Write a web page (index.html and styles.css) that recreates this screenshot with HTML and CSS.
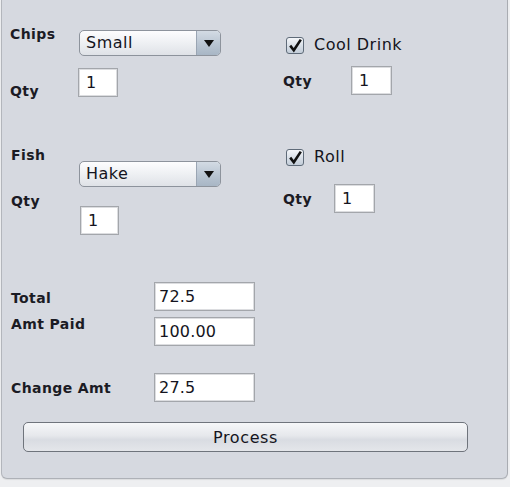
FILE: index.html
```html
<!DOCTYPE html>
<html>
<head>
<meta charset="utf-8">
<link rel="stylesheet" href="styles.css">
</head>
<body>
<div class="panel">
  <div class="orders">
    <div class="col-left">
      <span class="lbl m-chips">Chips</span>
      <div class="combo m-combo1">
        <span class="combo-text">Small</span>
        <span class="combo-btn"><svg width="10" height="7" viewBox="0 0 10 7"><path d="M0 0 H10 L5 7 Z" fill="#111"/></svg></span>
      </div>
      <span class="lbl m-qty1">Qty</span>
      <div class="field qty-chips">1</div>

      <span class="lbl m-fish">Fish</span>
      <div class="combo m-combo2">
        <span class="combo-text">Hake</span>
        <span class="combo-btn"><svg width="10" height="7" viewBox="0 0 10 7"><path d="M0 0 H10 L5 7 Z" fill="#111"/></svg></span>
      </div>
      <span class="lbl m-qty2">Qty</span>
      <div class="field qty-fish">1</div>
    </div>

    <div class="col-right">
      <div class="check m-drink">
        <span class="box"><svg width="15" height="15" viewBox="0 0 15 15"><path d="M2.2 7.6 L5.8 12.2 L12.8 1.6" fill="none" stroke="#111" stroke-width="2.6" stroke-linejoin="miter"/></svg></span>
        <span class="check-text">Cool Drink</span>
      </div>
      <div class="qty-row m-qtyrow1">
        <span class="lbl qty-lbl w-drink">Qty</span>
        <div class="field qty-drink">1</div>
      </div>
      <div class="check m-roll">
        <span class="box"><svg width="15" height="15" viewBox="0 0 15 15"><path d="M2.2 7.6 L5.8 12.2 L12.8 1.6" fill="none" stroke="#111" stroke-width="2.6" stroke-linejoin="miter"/></svg></span>
        <span class="check-text">Roll</span>
      </div>
      <div class="qty-row m-qtyrow2">
        <span class="lbl qty-lbl w-roll">Qty</span>
        <div class="field qty-roll">1</div>
      </div>
    </div>
  </div>

  <div class="totals">
    <span class="lbl m-total">Total</span>
    <div class="field amt m-total-f">72.5</div>
    <span class="lbl m-paid">Amt Paid</span>
    <div class="field amt m-paid-f">100.00</div>
    <span class="lbl m-change">Change Amt</span>
    <div class="field amt m-change-f">27.5</div>
  </div>

  <button class="process">Process</button>
</div>
</body>
</html>
```

FILE: styles.css
```css
html, body {
  margin: 0;
  padding: 0;
}
body {
  background: #eeeff1;
  width: 510px;
  height: 487px;
  overflow: hidden;
}
.panel {
  box-sizing: border-box;
  margin-left: 1px;
  width: 507px;
  height: 479px;
  background: #d6d9e0;
  border-left: 1px solid #b3b6bc;
  border-right: 1px solid #a9acb2;
  border-bottom: 1px solid #aeb1b7;
  border-radius: 0 0 6px 6px;
  padding-left: 8px;
  display: flex;
  flex-direction: column;
  align-items: flex-start;
  box-shadow: 0 1px 1px rgba(0,0,0,0.08);
}
.lbl {
  font-family: "DejaVu Sans", sans-serif;
  font-weight: bold;
  font-size: 14px;
  line-height: 16px;
  letter-spacing: 0.4px;
  color: #1b1b24;
  display: block;
}
.orders {
  display: flex;
  align-items: flex-start;
  width: 100%;
}
.col-left {
  width: 273px;
  display: grid;
  grid-template-columns: 69px auto;
  align-items: start;
  align-content: start;
  justify-items: start;
}
.m-chips { margin-top: 26px; }
.m-combo1 { margin-top: 30px; }
.m-qty1 { margin-top: 27px; }
.qty-chips { margin-top: 12px; margin-left: -1px; width: 40px; }
.m-fish { margin-top: 48px; margin-left: 1px; }
.m-combo2 { margin-top: 62px; }
.m-qty2 { margin-top: 6px; margin-left: 1px; }
.qty-fish { margin-top: 19px; margin-left: 1px; width: 39px; }

.combo {
  box-sizing: border-box;
  width: 142px;
  height: 26px;
  border: 1px solid #8d939c;
  border-radius: 5px;
  background: linear-gradient(#fdfdfe, #eef0f3 50%, #dfe2e7);
  display: flex;
  overflow: hidden;
}
.combo-text {
  flex: 1;
  font-family: "DejaVu Sans", sans-serif;
  font-size: 16px;
  line-height: 18px;
  letter-spacing: 0.5px;
  color: #141420;
  padding: 3px 0 0 6px;
}
.combo-btn {
  width: 23px;
  border-left: 1px solid #9aa5b3;
  background: linear-gradient(#d3dbe4, #b9c5d2 55%, #a8b6c5);
  display: flex;
  align-items: center;
  justify-content: center;
}

.field {
  box-sizing: border-box;
  height: 29px;
  background: #fff;
  border: 1px solid #a3a6ab;
  box-shadow: inset 0 0 0 1px #dcdde0;
  font-family: "DejaVu Sans", sans-serif;
  font-size: 16px;
  line-height: 26px;
  color: #141420;
  padding: 1px 0 0 7px;
}
.amt {
  width: 101px;
  padding-left: 4px;
  letter-spacing: 0.2px;
}

.col-right {
  display: flex;
  flex-direction: column;
  align-items: flex-start;
}
.check {
  display: flex;
  align-items: center;
  gap: 10px;
  margin-left: 3px;
  height: 18px;
}
.box {
  box-sizing: border-box;
  width: 18px;
  height: 17px;
  border: 1px solid #5f6b79;
  border-radius: 3px;
  background: linear-gradient(#f4f6f9, #d5dce5 60%, #c3cdd9);
  display: flex;
  align-items: center;
  justify-content: center;
}
.check-text {
  font-family: "DejaVu Sans", sans-serif;
  font-size: 16px;
  line-height: 18px;
  letter-spacing: 0.5px;
  color: #141420;
}
.m-drink { margin-top: 36px; }
.m-roll { margin-top: 53px; }
.qty-row {
  display: flex;
  align-items: flex-start;
}
.qty-lbl { margin-top: 7px; }
.w-drink { width: 68px; }
.w-roll { width: 51px; }
.m-qtyrow1 { margin-top: 12px; }
.m-qtyrow2 { margin-top: 18px; }
.qty-drink { width: 41px; }
.qty-roll { width: 41px; }

.totals {
  display: grid;
  grid-template-columns: 144px auto;
  align-items: start;
  align-content: start;
  justify-items: start;
}
.m-total { margin-top: 55px; margin-left: 1px; }
.m-total-f { margin-top: 47px; }
.m-paid { margin-top: 5px; margin-left: 1px; }
.m-paid-f { margin-top: 6px; }
.m-change { margin-top: 34px; margin-left: 1px; }
.m-change-f { margin-top: 27px; }

.process {
  margin-top: 20px;
  margin-left: 13px;
  width: 445px;
  height: 30px;
  box-sizing: border-box;
  border: 1px solid #6f747c;
  border-radius: 5px;
  background: linear-gradient(#f6f7f9, #e6e8ec 45%, #d9dce2 60%, #e4e6ea);
  font-family: "DejaVu Sans", sans-serif;
  font-size: 16px;
  letter-spacing: 0.6px;
  color: #141420;
  padding: 2px 0 0 0;
  line-height: 18px;
}
```
